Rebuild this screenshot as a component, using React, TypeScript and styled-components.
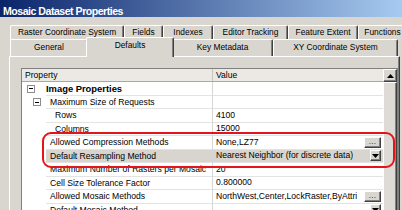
import React from "react";
import styled, { createGlobalStyle } from "styled-components";

const GlobalStyle = createGlobalStyle`
  html, body {
    margin: 0;
    padding: 0;
    background: #d9d6d0;
  }
  body {
    font-family: "Liberation Sans", Arial, sans-serif;
  }
`;

const Window = styled.div`
  position: relative;
  width: 402px;
  height: 210px;
  overflow: hidden;
  background: #d9d6d0;
`;

const TitleBar = styled.div`
  height: 17px;
  box-sizing: border-box;
  padding: 2px 0 0 3px;
  background: linear-gradient(90deg, #0a246a 0%, #a6caf0 100%);
  color: #fff;
  font-weight: bold;
  font-size: 10.6px;
  line-height: 19px;
  letter-spacing: -0.5px;
  white-space: nowrap;
  overflow: hidden;
`;

const Body = styled.div`
  padding: 8px 0 0 9px;
`;

const TabRows = styled.div`
  display: flex;
  flex-direction: column;
  margin-left: 1px;
  width: 420px;
`;

const TabRow = styled.div<{ $front?: boolean }>`
  display: flex;
  align-items: flex-start;
  height: ${(p) => (p.$front ? 17 : 15)}px;
  margin-top: ${(p) => (p.$front ? -1 : 0)}px;
  position: relative;
  z-index: ${(p) => (p.$front ? 2 : 1)};
`;

const Tab = styled.div<{ $w: number; $selected?: boolean; $front?: boolean }>`
  flex: none;
  box-sizing: border-box;
  width: ${(p) => p.$w}px;
  height: ${(p) => (p.$selected ? 20 : p.$front ? 17 : 15)}px;
  margin: ${(p) => (p.$selected ? "-2px -2px 0" : "0")};
  position: relative;
  z-index: ${(p) => (p.$selected ? 3 : 1)};
  background: #d9d6d0;
  border-top: 1px solid #ffffff;
  border-left: 1px solid #ffffff;
  border-right: 1px solid #404040;
  box-shadow: inset -1px 0 #808080;
  border-radius: 2px 2px 0 0;
  font-size: 8.4px;
  line-height: ${(p) => (p.$front ? 15 : 13)}px;
  color: #000;
  text-align: center;
  white-space: nowrap;
  overflow: hidden;
`;

const Panel = styled.div`
  position: relative;
  z-index: 1;
  box-sizing: border-box;
  width: 391px;
  height: 160px;
  padding: 11px 0 0 11px;
  border-top: 1px solid #ffffff;
  border-left: 1px solid #ffffff;
  border-right: 1px solid #404040;
  box-shadow: inset -1px 0 #808080;
  background: #d9d6d0;
`;

const Grid = styled.div`
  display: flex;
  width: 377px;
  height: 150px;
  box-sizing: border-box;
  border: 1px solid #808080;
  background: #ffffff;
`;

const Main = styled.div`
  width: 361px;
  display: flex;
  flex-direction: column;
`;

const Header = styled.div`
  display: flex;
  height: 13px;
  box-sizing: border-box;
  border-bottom: 1px solid #a8a8a8;
  background: #ebe9e4;
  font-size: 8.6px;
  line-height: 12px;
  color: #000;
`;

const HeadCell = styled.div<{ $w?: number }>`
  box-sizing: border-box;
  width: ${(p) => (p.$w ? `${p.$w}px` : "auto")};
  flex: ${(p) => (p.$w ? "none" : 1)};
  padding-left: 3px;
  border-left: ${(p) => (p.$w ? "none" : "1px solid #c8c6c0")};
`;

const Row = styled.div`
  display: flex;
  height: 13.5px;
  font-size: 8.6px;
  line-height: 13px;
  color: #000;
`;

const Gutter = styled.div<{ $exp: number }>`
  width: 24px;
  flex: none;
  display: flex;
  align-items: center;
  padding-left: ${(p) => p.$exp}px;
  box-sizing: border-box;
`;

const Expander = styled.div`
  width: 8px;
  height: 8px;
  box-sizing: border-box;
  border: 1px solid #8c8c8c;
  background: #fff;
  display: flex;
  align-items: center;
  justify-content: center;
  &::after {
    content: "";
    width: 4px;
    height: 1px;
    background: #000;
  }
`;

const PropCell = styled.div<{ $indent: number; $sel?: boolean; $bold?: boolean }>`
  width: 166px;
  flex: none;
  box-sizing: border-box;
  padding-left: ${(p) => p.$indent}px;
  border-bottom: 1px solid #e3e3e3;
  background: ${(p) => (p.$sel ? "#d8d5cf" : "transparent")};
  font-weight: ${(p) => (p.$bold ? "bold" : "normal")};
  font-size: ${(p) => (p.$bold ? "9.4px" : "8.6px")};
  white-space: nowrap;
  overflow: hidden;
`;

const ValueCell = styled.div<{ $sel?: boolean }>`
  flex: 1;
  display: flex;
  align-items: center;
  justify-content: space-between;
  box-sizing: border-box;
  padding: 0 2px 0 3px;
  border-left: 1px solid #d6d6d6;
  border-bottom: 1px solid #e3e3e3;
  background: ${(p) => (p.$sel ? "#d8d5cf" : "transparent")};
  white-space: nowrap;
  overflow: hidden;
`;

const ValueText = styled.span`
  overflow: hidden;
`;

const SmallButton = styled.div<{ $w: number }>`
  flex: none;
  width: ${(p) => p.$w}px;
  height: 11px;
  box-sizing: border-box;
  background: #d9d6d0;
  border-style: solid;
  border-width: 1px;
  border-color: #ffffff #404040 #404040 #ffffff;
  box-shadow: inset -1px -1px #808080;
  display: flex;
  align-items: center;
  justify-content: center;
  font-size: 8px;
  line-height: 6px;
  color: #000;
  letter-spacing: 0.3px;
`;

const ScrollBar = styled.div`
  width: 14px;
  display: flex;
  flex-direction: column;
`;

const ScrollButton = styled.div`
  height: 13px;
  box-sizing: border-box;
  background: #d9d6d0;
  border-style: solid;
  border-width: 1px;
  border-color: #ffffff #404040 #404040 #ffffff;
  box-shadow: inset -1px -1px #808080;
  display: flex;
  align-items: center;
  justify-content: center;
`;

const Thumb = styled(ScrollButton)`
  flex: 1;
  height: auto;
  background: #dedbd6;
`;

const Highlight = styled.div`
  position: absolute;
  left: 42px;
  top: 132px;
  width: 353px;
  height: 36px;
  box-sizing: border-box;
  border: 2.5px solid #e4141b;
  border-radius: 9px;
  pointer-events: none;
  z-index: 5;
`;

const Triangle = ({ up }: { up?: boolean }) => (
  <svg width="7" height="4" viewBox="0 0 7 4">
    <polygon points={up ? "0,4 7,4 3.5,0" : "0,0 7,0 3.5,4"} fill="#000" />
  </svg>
);

type RowData = {
  name: string;
  value?: string;
  exp?: number;
  indent: number;
  bold?: boolean;
  sel?: boolean;
  btn?: "more" | "drop";
};

const rows: RowData[] = [
  { name: "Image Properties", exp: 5, indent: 0, bold: true },
  { name: "Maximum Size of Requests", exp: 11, indent: 4 },
  { name: "Rows", value: "4100", indent: 9 },
  { name: "Columns", value: "15000", indent: 9 },
  { name: "Allowed Compression Methods", value: "None,LZ77", indent: 4, btn: "more" },
  {
    name: "Default Resampling Method",
    value: "Nearest Neighbor (for discrete data)",
    indent: 4,
    sel: true,
    btn: "drop",
  },
  { name: "Maximum Number of Rasters per Mosaic", value: "20", indent: 4 },
  { name: "Cell Size Tolerance Factor", value: "0.800000", indent: 4 },
  {
    name: "Allowed Mosaic Methods",
    value: "NorthWest,Center,LockRaster,ByAttri",
    indent: 4,
    btn: "more",
  },
  { name: "Default Mosaic Method", value: "", indent: 4, btn: "drop" },
];

const backTabs = [
  { label: "Raster Coordinate System", w: 114 },
  { label: "Fields", w: 39 },
  { label: "Indexes", w: 50 },
  { label: "Editor Tracking", w: 75 },
  { label: "Feature Extent", w: 70 },
  { label: "Functions", w: 49 },
];

const frontTabs = [
  { label: "General", w: 78 },
  { label: "Defaults", w: 88, selected: true },
  { label: "Key Metadata", w: 101 },
  { label: "XY Coordinate System", w: 125 },
];

const App = () => {
  return (
    <Window>
      <GlobalStyle />
      <TitleBar>Mosaic Dataset Properties</TitleBar>
      <Body>
        <TabRows>
          <TabRow>
            {backTabs.map((t) => (
              <Tab key={t.label} $w={t.w}>
                {t.label}
              </Tab>
            ))}
          </TabRow>
          <TabRow $front>
            {frontTabs.map((t) => (
              <Tab key={t.label} $w={t.w} $front $selected={t.selected}>
                {t.label}
              </Tab>
            ))}
          </TabRow>
        </TabRows>
        <Panel>
          <Grid>
            <Main>
              <Header>
                <HeadCell $w={190}>Property</HeadCell>
                <HeadCell>Value</HeadCell>
              </Header>
              {rows.map((r) => (
                <Row key={r.name}>
                  <Gutter $exp={r.exp ?? 0}>{r.exp !== undefined && <Expander />}</Gutter>
                  <PropCell $indent={r.indent} $sel={r.sel} $bold={r.bold}>
                    {r.name}
                  </PropCell>
                  <ValueCell $sel={r.sel}>
                    <ValueText>{r.value}</ValueText>
                    {r.btn === "more" && <SmallButton $w={17}>...</SmallButton>}
                    {r.btn === "drop" && (
                      <SmallButton $w={11}>
                        <Triangle />
                      </SmallButton>
                    )}
                  </ValueCell>
                </Row>
              ))}
            </Main>
            <ScrollBar>
              <ScrollButton>
                <Triangle up />
              </ScrollButton>
              <Thumb />
            </ScrollBar>
          </Grid>
        </Panel>
      </Body>
      <Highlight />
    </Window>
  );
};

export default App;
